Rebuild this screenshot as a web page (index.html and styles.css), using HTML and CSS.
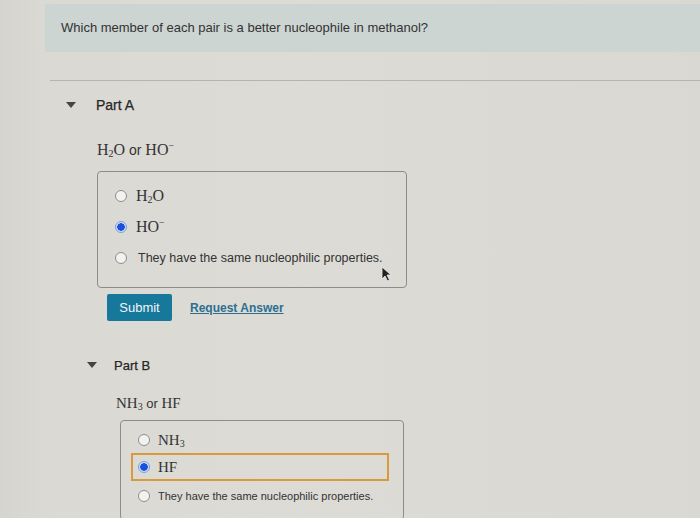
FILE: index.html
```html
<!DOCTYPE html>
<html>
<head>
<meta charset="utf-8">
<link rel="stylesheet" href="styles.css">
</head>
<body>
<div class="page">
  <div class="question">Which member of each pair is a better nucleophile in methanol?</div>
  <div class="rule"></div>

  <section class="part part-a">
    <div class="part-head"><span class="tri"></span><span class="part-title">Part A</span></div>
    <div class="prompt"><span class="chem">H<sub>2</sub>O</span> or <span class="chem">HO<sup>−</sup></span></div>
    <div class="choices">
      <div class="opt"><span class="radio"></span><span class="chem">H<sub>2</sub>O</span></div>
      <div class="opt"><span class="radio on"></span><span class="chem">HO<sup>−</sup></span></div>
      <div class="opt"><span class="radio"></span><span class="txt">They have the same nucleophilic properties.</span></div>
      <svg class="cursor" width="12" height="16" viewBox="0 0 12 16"><path d="M1 1 L1 13 L4 10 L6.5 15 L8.5 14 L6 9 L10 9 Z" fill="#222" stroke="#eee" stroke-width="0.8"/></svg>
    </div>
    <div class="actions">
      <button class="submit">Submit</button>
      <a class="request">Request Answer</a>
    </div>
  </section>

  <section class="part part-b">
    <div class="part-head"><span class="tri"></span><span class="part-title">Part B</span></div>
    <div class="prompt"><span class="chem">NH<sub>3</sub></span> or <span class="chem">HF</span></div>
    <div class="choices">
      <div class="opt"><span class="radio"></span><span class="chem">NH<sub>3</sub></span></div>
      <div class="opt hl"><span class="radio on"></span><span class="chem">HF</span></div>
      <div class="opt"><span class="radio"></span><span class="txt">They have the same nucleophilic properties.</span></div>
    </div>
  </section>
</div>
</body>
</html>
```

FILE: styles.css
```css
html, body {
  margin: 0;
  padding: 0;
  height: 518px;
  overflow: hidden;
}
body {
  background: linear-gradient(90deg, #d6d4cf 0px, #dbd9d4 45px, #dddbd6 300px, #d9d8d3 700px);
  font-family: "Liberation Sans", Arial, sans-serif;
  color: #333;
}
.page {
  padding-top: 4px;
}
.question {
  margin-left: 45px;
  height: 48px;
  background: #ccd5d2;
  padding-left: 16px;
  font-size: 13px;
  line-height: 48px;
  color: #333;
}
.rule {
  margin: 28px 0 0 50px;
  border-top: 1px solid #b5b4af;
}
.part-head {
  display: flex;
  align-items: center;
  height: 20px;
}
.tri {
  width: 0;
  height: 0;
  border-left: 5px solid transparent;
  border-right: 5px solid transparent;
  border-top: 6px solid #444;
}
.part-title {
  font-size: 14px;
  color: #262626;
  -webkit-text-stroke: 0.25px #262626;
}
.prompt {
  font-size: 14px;
  color: #333;
}
.chem {
  font-family: "Liberation Serif", "Times New Roman", serif;
  font-size: 16px;
  color: #333;
}
sub, sup {
  font-size: 10px;
  line-height: 0;
}
sub {
  vertical-align: -2px;
}
.choices {
  position: relative;
  border: 1px solid #8d8c88;
  border-radius: 4px;
  box-sizing: border-box;
}
.opt {
  display: flex;
  align-items: center;
  gap: 9px;
  white-space: nowrap;
}
.radio {
  width: 10px;
  height: 10px;
  border-radius: 50%;
  border: 1px solid #8e8e8e;
  background: #f2f2f0;
  flex: none;
}
.radio.on {
  border: 1px solid #7da0e0;
  background: radial-gradient(circle, #1c50d8 0 3.5px, #cfdcf6 4px);
}
.txt {
  font-size: 12.5px;
  color: #333;
}
.cursor {
  position: absolute;
  left: 283px;
  top: 94px;
}

/* Part A */
.part-a .part-head {
  margin: 14px 0 0 66px;
  gap: 20px;
}
.part-a .prompt {
  margin: 26px 0 0 97px;
}
.part-a .choices {
  margin: 12px 0 0 97px;
  width: 310px;
  height: 117px;
  padding: 8px 0 0 17px;
}
.part-a .opt {
  height: 31px;
}
.part-a .opt .txt {
  margin-left: 2px;
}
.actions {
  display: flex;
  align-items: center;
  gap: 18px;
  margin: 6px 0 0 107px;
}
.submit {
  width: 65px;
  height: 27px;
  background: #16789a;
  color: #f2f6f8;
  border: none;
  border-radius: 2px;
  font-family: "Liberation Sans", Arial, sans-serif;
  font-size: 13px;
  padding: 0;
}
.request {
  font-size: 12px;
  font-weight: bold;
  color: #2d6f8f;
  text-decoration: underline;
}

/* Part B */
.part-b .part-head {
  margin: 34px 0 0 87px;
  gap: 17px;
}
.part-b .part-title {
  font-size: 13px;
}
.part-b .prompt {
  margin: 20px 0 0 116px;
  font-size: 13px;
}
.part-b .chem {
  font-size: 15px;
}
.part-b .choices {
  margin: 8px 0 0 120px;
  width: 284px;
  height: 100px;
  padding: 6px 0 0 10px;
}
.part-b .opt {
  height: 26px;
  padding-left: 7px;
  gap: 8px;
}
.part-b .opt.hl {
  height: 28px;
  width: 258px;
  box-sizing: border-box;
  border: 2px solid #d89a3c;
  padding-left: 5px;
  margin: 0 0 2px 0;
}
.part-b .txt {
  font-size: 11px;
}
```
